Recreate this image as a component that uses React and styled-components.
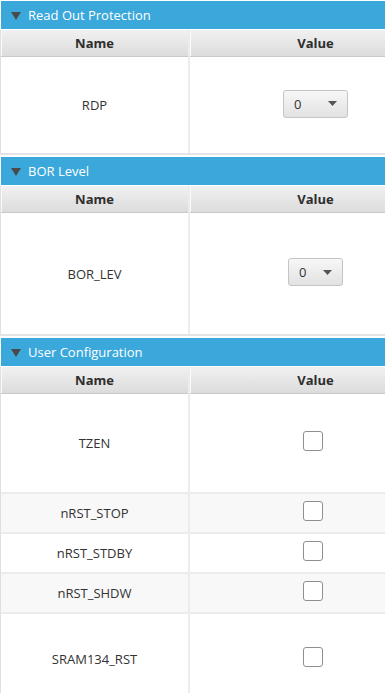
import React from "react";
import { createGlobalStyle, styled } from "styled-components";

const GlobalStyle = createGlobalStyle`
	html, body {
		margin: 0;
		padding: 0;
		background: #ffffff;
		overflow: hidden;
	}
	body {
		font-family: "Open Sans", "Noto Sans", "Liberation Sans", sans-serif;
		font-size: 13px;
		color: #333333;
	}
`;

const sections = [
	{
		title: "Read Out Protection",
		rows: [{ name: "RDP", kind: "select", value: "0", width: 65, height: 96 }],
	},
	{
		title: "BOR Level",
		rows: [{ name: "BOR_LEV", kind: "select", value: "0", width: 55, height: 121 }],
	},
	{
		title: "User Configuration",
		rows: [
			{ name: "TZEN", kind: "check", height: 98 },
			{ name: "nRST_STOP", kind: "check", height: 38 },
			{ name: "nRST_STDBY", kind: "check", height: 38 },
			{ name: "nRST_SHDW", kind: "check", height: 38 },
			{ name: "SRAM134_RST", kind: "check", height: 90 },
		],
	},
];

function Arrow() {
	return (
		<svg width="9" height="5" viewBox="0 0 9 5">
			<path d="M0 0 L9 0 L4.5 5 Z" fill="#555555" />
		</svg>
	);
}

function App() {
	return (
		<Page>
			<GlobalStyle />
			{sections.map((section) => (
				<Section key={section.title}>
					<TitleBar>
						<TitleArrow>
							<svg width="10" height="8" viewBox="0 0 10 8">
								<path d="M0 0 L10 0 L5 8 Z" fill="#4a4a4a" />
							</svg>
						</TitleArrow>
						{section.title}
					</TitleBar>
					<Table>
						<HeadCell>Name</HeadCell>
						<HeadCell>Value</HeadCell>
						{section.rows.map((row, i) => (
							<React.Fragment key={row.name}>
								<Cell $odd={i % 2 === 1} $height={row.height}>
									{row.name}
								</Cell>
								<Cell $odd={i % 2 === 1} $height={row.height}>
									{row.kind === "select" ? (
										<Select $width={row.width}>
											<span>{row.value}</span>
											<Arrow />
										</Select>
									) : (
										<Check />
									)}
								</Cell>
							</React.Fragment>
						))}
					</Table>
				</Section>
			))}
		</Page>
	);
}

export default App;

const Page = styled.div`
	width: 385px;
	height: 693px;
	overflow: hidden;
	padding-top: 1px;
	box-sizing: border-box;
	display: flex;
	flex-direction: column;
	gap: 2px;
`;

const Section = styled.section`
	display: flex;
	flex-direction: column;
	gap: 1px;
	border-bottom: 2px solid #e4e4e4;
	flex-shrink: 0;
`;

const TitleBar = styled.div`
	height: 28px;
	width: 384px;
	margin-left: 1px;
	background: #3ba8dc;
	color: #ffffff;
	display: flex;
	align-items: center;
	gap: 7px;
	padding-left: 10px;
	box-sizing: border-box;
	font-size: 13px;
`;

const TitleArrow = styled.span`
	display: flex;
	align-items: center;
	padding-top: 1px;
`;

const Table = styled.div`
	display: grid;
	grid-template-columns: 187px 251px;
	column-gap: 2px;
	row-gap: 2px;
	width: 440px;
	background: #ececec;
	border-left: 1px solid #e0e0e0;
`;

const HeadCell = styled.div`
	height: 26px;
	display: flex;
	align-items: center;
	justify-content: center;
	font-weight: 700;
	color: #2e2e2e;
	background: linear-gradient(#f1f1f1, #dcdcdc);
	border-bottom: 1px solid #c9c9c9;
	margin-bottom: -2px;
	box-shadow: inset 1px 0 0 #fafafa;
`;

const Cell = styled.div`
	height: ${(p) => p.$height}px;
	display: flex;
	align-items: center;
	justify-content: center;
	background: ${(p) => (p.$odd ? "#f8f8f8" : "#ffffff")};
	color: #333333;
`;

const Select = styled.div`
	width: ${(p) => p.$width}px;
	height: 28px;
	box-sizing: border-box;
	border: 1px solid #c4c4c4;
	border-radius: 3px;
	background: linear-gradient(#f7f7f7, #e2e2e2);
	display: flex;
	align-items: center;
	justify-content: space-between;
	padding: 0 10px 0 10px;
	margin-top: -3px;
	color: #333333;
`;

const Check = styled.div`
	width: 20px;
	height: 20px;
	box-sizing: border-box;
	border: 1px solid #8f8f8f;
	border-radius: 3px;
	background: #ffffff;
	margin-top: -4px;
	margin-right: 5px;
`;
